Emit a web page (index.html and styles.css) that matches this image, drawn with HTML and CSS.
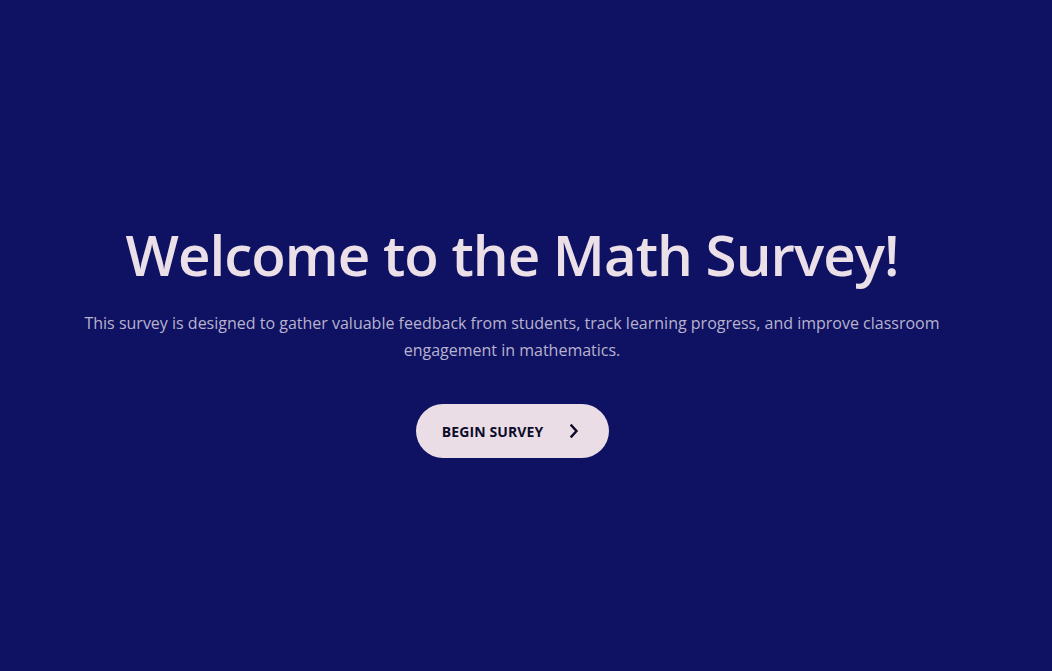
FILE: index.html
```html
<!DOCTYPE html>
<html lang="en">
<head>
<meta charset="utf-8">
<title>Math Survey</title>
<link rel="stylesheet" href="styles.css">
</head>
<body>
<main class="page">
  <section class="hero">
    <h1 class="title">Welcome to the Math Survey!</h1>
    <p class="lead">This survey is designed to gather valuable feedback from students, track learning progress, and improve classroom engagement in mathematics.</p>
    <button class="begin" type="button">
      <span>BEGIN SURVEY</span>
      <svg class="chev" width="10" height="16" viewBox="0 0 10 16" aria-hidden="true"><path d="M2.5 2.5 L7.5 8 L2.5 13.5" fill="none" stroke="currentColor" stroke-width="2.4" stroke-linecap="square"/></svg>
    </button>
  </section>
</main>
</body>
</html>
```

FILE: styles.css
```css
* { box-sizing: border-box; }
html, body { margin: 0; height: 100%; }
body {
  background: #0f1262;
  font-family: "Open Sans", "Noto Sans", sans-serif;
}
.page {
  min-height: 100%;
  display: flex;
  align-items: center;
  justify-content: center;
  padding: 0 28px 0 0;
}
.hero {
  display: flex;
  flex-direction: column;
  align-items: center;
  text-align: center;
  margin-top: 8px;
}
.title {
  margin: 0;
  color: #ebdfe8;
  font-size: 56.5px;
  font-weight: 600;
  letter-spacing: -1px;
  line-height: 1.2;
}
.lead {
  margin: 22px 0 0;
  width: 880px;
  color: #b8b2cf;
  font-size: 16px;
  line-height: 27px;
}
.begin {
  margin-top: 40px;
  height: 54px;
  width: 193px;
  border: 0;
  border-radius: 27px;
  background: #eadde6;
  color: #0d0c2a;
  font-family: inherit;
  font-weight: 700;
  font-size: 14px;
  letter-spacing: 0.1px;
  display: flex;
  align-items: center;
  justify-content: center;
  gap: 26px;
  padding: 0 3px 0 0;
}
.chev { display: block; }
```
